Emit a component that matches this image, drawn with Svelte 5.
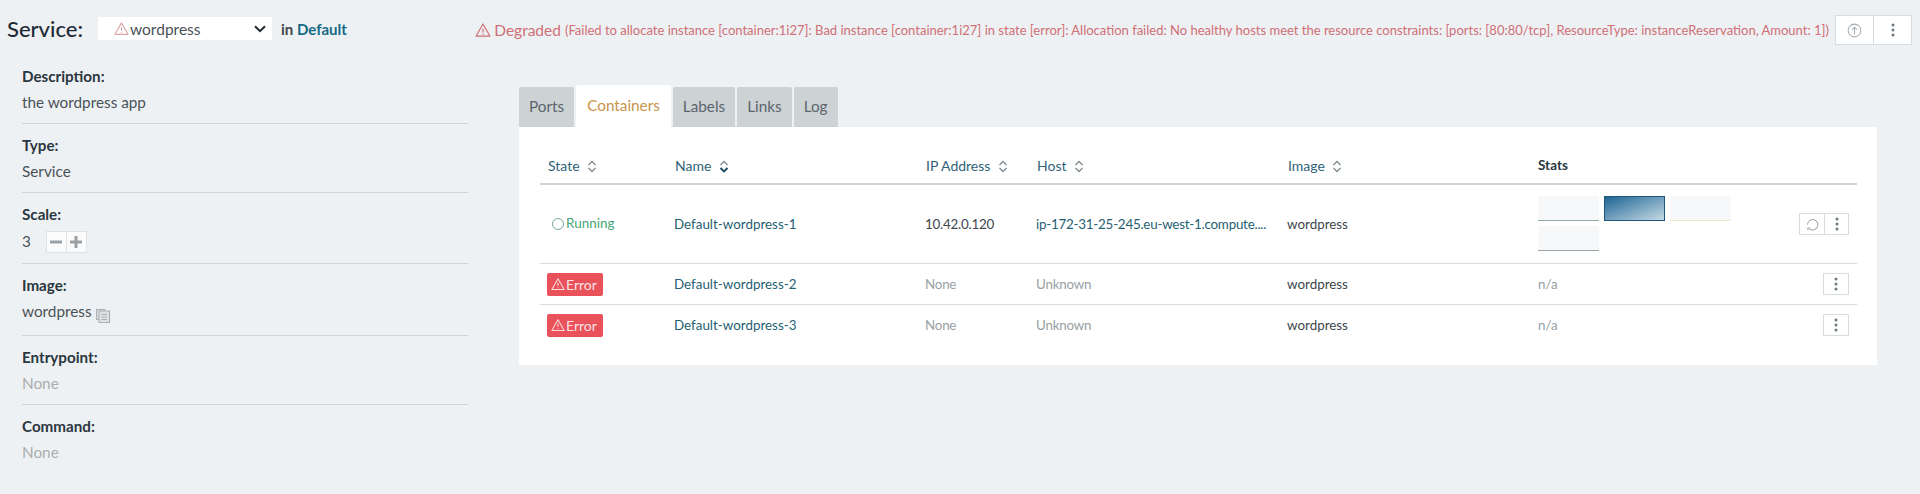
<script lang="ts">
  const INFO = [
    { label: "Description:", value: "the wordpress app" },
    { label: "Type:", value: "Service" },
    { label: "Scale:", value: "3", kind: "scale" },
    { label: "Image:", value: "wordpress", kind: "image" },
    { label: "Entrypoint:", value: "None", kind: "none" },
    { label: "Command:", value: "None", kind: "none" },
  ];
  const TABS = ["Ports", "Containers", "Labels", "Links", "Log"];
  const COLUMNS = [
    { label: "State", cls: "c-state" },
    { label: "Name", cls: "c-name", active: true },
    { label: "IP Address", cls: "c-ip" },
    { label: "Host", cls: "c-host" },
    { label: "Image", cls: "c-image" },
  ];
  const ROWS = [
    { state: "running", name: "Default-wordpress-1", ip: "10.42.0.120", host: "ip-172-31-25-245.eu-west-1.compute....", stats: true },
    { state: "error", name: "Default-wordpress-2", ip: "None", host: "Unknown", stats: false },
    { state: "error", name: "Default-wordpress-3", ip: "None", host: "Unknown", stats: false },
  ];
  const MESSAGE =
    "(Failed to allocate instance [container:1i27]: Bad instance [container:1i27] in state [error]: Allocation failed: No healthy hosts meet the resource constraints: [ports: [80:80/tcp], ResourceType: instanceReservation, Amount: 1])";
</script>

{#snippet warn(size: number, color: string)}
  <svg class="warn" width={size} height={size} viewBox="0 0 16 16" fill="none" stroke={color} stroke-width="1.2">
    <path d="M8 2 15 14.2H1Z" stroke-linejoin="round" />
    <path d="M8 6.4v4M8 11.6v1.1" />
  </svg>
{/snippet}

{#snippet kebab()}
  <svg width="4" height="14" viewBox="0 0 4 14" fill="#6f7a80">
    <circle cx="2" cy="2" r="1.5" /><circle cx="2" cy="7" r="1.5" /><circle cx="2" cy="12" r="1.5" />
  </svg>
{/snippet}

{#snippet sort(active: boolean)}
  <svg class="sort" width="10" height="13" viewBox="0 0 10 13" fill="none" stroke="#7f8b92" stroke-width="1.3">
    <path d="M1.5 5 5 1.5 8.5 5" />
    <path d="M1.5 8 5 11.5 8.5 8" stroke={active ? "#1c4a5e" : "#7f8b92"} stroke-width={active ? 1.9 : 1.3} />
  </svg>
{/snippet}

<div class="page">
  <header>
    <div class="title">
      <h1>Service:</h1>
      <div class="select">
        {@render warn(15, "#dda6a6")}
        <span>wordpress</span>
        <svg class="caret" width="12" height="8" viewBox="0 0 12 8" fill="none" stroke="#1f2b33" stroke-width="2"><path d="M1 1.2 6 6.2 11 1.2" /></svg>
      </div>
      <span class="in">in <a href="#default">Default</a></span>
    </div>
    <div class="status">
      {@render warn(16, "#cf7077")}
      <span class="degraded">Degraded</span>
      <span class="message">{MESSAGE}</span>
      <div class="btns big">
        <button aria-label="Upgrade">
          <svg width="15" height="15" viewBox="0 0 16 16" fill="none" stroke="#a3abb0" stroke-width="1.1"><circle cx="8" cy="8" r="6.8" /><path d="M8 12V4.5M5.2 7.2 8 4.5l2.8 2.7" /></svg>
        </button>
        <button aria-label="More">{@render kebab()}</button>
      </div>
    </div>
  </header>

  <div class="body">
    <aside>
      {#each INFO as item}
        <div class="item {item.kind ?? ''}">
          <div class="label">{item.label}</div>
          <div class="value">
            <span>{item.value}</span>
            {#if item.kind === "scale"}
              <span class="stepper">
                <button aria-label="Decrease"><svg width="12" height="12" viewBox="0 0 12 12"><path d="M0 6h12" stroke="#9aa1a6" stroke-width="3" /></svg></button>
                <button aria-label="Increase"><svg width="12" height="12" viewBox="0 0 12 12"><path d="M0 6h12M6 0v12" stroke="#9aa1a6" stroke-width="3" /></svg></button>
              </span>
            {/if}
            {#if item.kind === "image"}
              <svg class="copy" width="16" height="16" viewBox="0 0 16 16" fill="#dfe2e4" stroke="#a9aeb2" stroke-width="1.1"><path d="M1.5 2.5h8v10h-8Z" /><path d="M4 4h10.5v11.5H4Z" /><path d="M6.5 7.5h5.5M6.5 10h5.5M6.5 12.5h5.5" /></svg>
            {/if}
          </div>
        </div>
      {/each}
    </aside>

    <main>
      <nav>
        {#each TABS as tab}
          <span class="tab" class:active={tab === "Containers"}>{tab}</span>
        {/each}
      </nav>
      <section class="panel">
        <table>
          <thead>
            <tr>
              {#each COLUMNS as col}
                <th class={col.cls}>{col.label} {@render sort(!!col.active)}</th>
              {/each}
              <th class="c-stats stats-head">Stats</th>
              <th class="c-actions"></th>
            </tr>
          </thead>
          <tbody>
            {#each ROWS as row}
              <tr class:tall={row.stats}>
                <td class="cell-state">
                  {#if row.state === "running"}
                    <span class="running"><i class="ring"></i>Running</span>
                  {:else}
                    <span class="badge">{@render warn(14, "#fbdcdc")}Error</span>
                  {/if}
                </td>
                <td class="link">{row.name}</td>
                <td class="tight" class:muted={!row.stats}>{row.ip}</td>
                <td class="tight {row.stats ? 'link' : 'muted'}">{row.host}</td>
                <td>wordpress</td>
                <td class="cell-stats" class:muted={!row.stats}>
                  {#if row.stats}
                    <div class="sparks">
                      <div class="spark green"></div>
                      <div class="spark hot"></div>
                      <div class="spark yellow"></div>
                      <div class="spark grey"></div>
                    </div>
                  {:else}
                    n/a
                  {/if}
                </td>
                <td class="actions">
                  <div class="btns small">
                    {#if row.stats}
                      <button aria-label="Restart">
                        <svg width="13" height="13" viewBox="0 0 14 14" fill="none" stroke="#a3abb0" stroke-width="1.1"><path d="M3.4 11.4A5.6 5.6 0 1 0 1.6 7.2" /><path d="M2 13V10.8H4.6" /></svg>
                      </button>
                    {/if}
                    <button aria-label="More">{@render kebab()}</button>
                  </div>
                </td>
              </tr>
            {/each}
          </tbody>
        </table>
      </section>
    </main>
  </div>
</div>

<style>
  :global(body) {
    margin: 0;
    background: #eef1f3;
  }
  .page {
    width: 1920px;
    height: 494px;
    overflow: hidden;
    font-family: Lato, "Open Sans", sans-serif;
    font-size: 14px;
    color: #3a4248;
    background: #eef1f3;
  }
  button {
    padding: 0;
    font: inherit;
    background: #fff;
    display: flex;
    align-items: center;
    justify-content: center;
  }
  a {
    color: #136a86;
    text-decoration: none;
  }

  header {
    display: flex;
    align-items: flex-start;
    justify-content: space-between;
    height: 63px;
    padding: 15px 8px 0 7px;
    box-sizing: border-box;
  }
  .title {
    display: flex;
    align-items: center;
    height: 27px;
  }
  h1 {
    margin: 0;
    font-size: 22px;
    font-weight: 500;
    color: #1d2a35;
    width: 91px;
  }
  .select {
    display: flex;
    align-items: center;
    width: 174px;
    height: 23px;
    padding-left: 16px;
    box-sizing: border-box;
    background: #fff;
    font-size: 15.5px;
    color: #4a5157;
    position: relative;
    gap: 1px;
  }
  .caret {
    position: absolute;
    right: 6px;
    top: 8px;
  }
  .in {
    margin-left: 9px;
    font-size: 15px;
    font-weight: 700;
    color: #3d464c;
  }
  .status {
    display: flex;
    align-items: center;
    height: 30px;
    color: #cf6f76;
  }
  .degraded {
    font-size: 15.5px;
    margin: 0 4px 0 3px;
  }
  .message {
    font-size: 13px;
    white-space: nowrap;
  }
  .btns {
    display: flex;
    width: fit-content;
    background: #fff;
    border: 1px solid #d8dcdf;
  }
  .btns button {
    border: 0;
    height: 100%;
  }
  .btns button + button {
    border-left: 1px solid #d8dcdf;
  }
  .big {
    margin-left: 6px;
    height: 30px;
    box-sizing: border-box;
  }
  .big button {
    width: 37px;
  }
  .big button + button {
    width: 38px;
  }
  .small {
    height: 22px;
    box-sizing: border-box;
    margin-left: auto;
  }
  .small button {
    width: 24px;
  }

  .body {
    display: flex;
  }
  aside {
    width: 446px;
    margin-left: 22px;
  }
  .item {
    padding: 8px 0;
    border-bottom: 1px solid #cfd4d7;
  }
  .item:first-child {
    padding-top: 0;
  }
  .item:last-child {
    border-bottom: 0;
  }
  .label {
    height: 26px;
    line-height: 26px;
    font-size: 15.2px;
    font-weight: 700;
    color: #2a3640;
  }
  .value {
    height: 26px;
    line-height: 26px;
    font-size: 15.3px;
    color: #4a5259;
    display: flex;
    align-items: center;
  }
  .scale .value {
    height: 28px;
  }
  .image .value {
    height: 29px;
    align-items: flex-start;
  }
  .none .value {
    color: #a9aeb1;
  }
  .stepper {
    display: flex;
    margin-left: 15px;
    margin-top: 2px;
  }
  .stepper button {
    width: 21px;
    height: 22px;
    border: 1px solid #dfe2e4;
    background: #fbfbfc;
  }
  .stepper button + button {
    border-left: 0;
    width: 20px;
  }
  .copy {
    margin: 9px 0 0 3px;
  }

  main {
    margin-left: 51px;
    width: 1358px;
    margin-top: 24px;
  }
  nav {
    display: flex;
    gap: 2px;
    height: 40px;
    align-items: flex-end;
  }
  .tab {
    height: 40px;
    line-height: 39px;
    padding: 0 10px;
    box-sizing: border-box;
    background: #cdd2d5;
    color: #5c656b;
    font-size: 15.3px;
    border-radius: 2px 2px 0 0;
  }
  .tab.active {
    height: 42px;
    line-height: 41px;
    background: #fff;
    color: #c8944a;
    padding: 0 11px;
  }
  .panel {
    background: #fff;
    padding: 20px 20px 0 21px;
    height: 238px;
    box-sizing: border-box;
  }
  table {
    width: 1317px;
    border-collapse: collapse;
    table-layout: fixed;
  }
  th {
    text-align: left;
    height: 37px;
    padding: 0 0 0 1px;
    box-sizing: border-box;
    font-size: 14px;
    font-weight: 400;
    color: #2f6377;
    border-bottom: 2px solid #cfd4d7;
    vertical-align: middle;
  }
  .stats-head {
    font-weight: 700;
    color: #2a3640;
    font-size: 13.5px;
  }
  .sort {
    margin-left: 4px;
    vertical-align: -2px;
  }
  td {
    padding: 0;
    height: 40px;
    font-size: 13.4px;
    color: #3e464c;
    border-bottom: 1px solid #d9dcde;
    vertical-align: middle;
    white-space: nowrap;
  }
  tbody tr:last-child td {
    border-bottom: 0;
  }
  tr.tall td {
    height: 78px;
  }
  .c-state { width: 134px; }
  th.c-state { padding-left: 8px; }
  .c-name { width: 251px; }
  .c-ip { width: 111px; }
  .c-host { width: 251px; }
  .c-image { width: 250px; }
  .c-stats { width: 262px; }
  .c-actions { width: 58px; }
  .cell-state { padding-left: 7px; }
  .cell-stats { padding-left: 1px; }
  .actions { padding-right: 8px; }
  .tight {
    letter-spacing: -0.24px;
  }
  .link {
    color: #1f5f72;
  }
  .muted {
    color: #989fa4;
  }
  .running {
    display: inline-flex;
    align-items: center;
    gap: 2px;
    margin-left: 5px;
    color: #47a577;
    font-size: 13.5px;
    position: relative;
    top: -1px;
  }
  .ring {
    width: 10px;
    height: 10px;
    border: 1px solid #7aa892;
    border-radius: 50%;
    position: relative;
    top: 1px;
  }
  .badge {
    display: inline-flex;
    align-items: center;
    gap: 1px;
    width: 56px;
    height: 23px;
    box-sizing: border-box;
    padding-left: 4px;
    border-radius: 2px;
    background: #e9525a;
    color: #fbe4e4;
    font-size: 14px;
  }
  .sparks {
    display: grid;
    grid-template-columns: repeat(3, 61px);
    grid-auto-rows: 25px;
    gap: 5px;
    margin-bottom: 2px;
  }
  .spark {
    background: #f6f8fa;
    border-bottom: 1px solid;
    box-sizing: border-box;
  }
  .spark.green { border-color: #8eaaa6; }
  .spark.yellow { border-color: #ece8c2; }
  .spark.grey { border-color: #98a4aa; }
  .spark.hot {
    border: 1px solid #1f5578;
    background: linear-gradient(to bottom right, #1d6594, #c6d9e5);
  }
</style>
